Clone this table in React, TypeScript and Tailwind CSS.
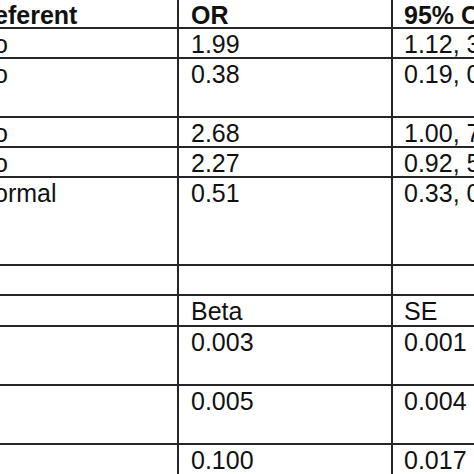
const ROWS: { h: string; cells: [string, string, string]; bold?: boolean }[] = [
  { h: "h-[29px]", cells: ["Referent", "OR", "95% CI"], bold: true },
  { h: "h-[30px]", cells: ["No", "1.99", "1.12, 3.54"] },
  { h: "h-[59px]", cells: ["No", "0.38", "0.19, 0.76"] },
  { h: "h-[30px]", cells: ["No", "2.68", "1.00, 7.18"] },
  { h: "h-[30px]", cells: ["No", "2.27", "0.92, 5.60"] },
  { h: "h-[88px]", cells: ["Normal", "0.51", "0.33, 0.79"] },
  { h: "h-[30px]", cells: ["", "", ""] },
  { h: "h-[31px]", cells: ["", "Beta", "SE"] },
  { h: "h-[59px]", cells: ["", "0.003", "0.001"] },
  { h: "h-[59px]", cells: ["", "0.005", "0.004"] },
  { h: "h-[59px]", cells: ["", "0.100", "0.017"] },
];

export default function App() {
  return (
    <div className="h-[474px] w-[474px] overflow-hidden bg-white font-['Liberation_Sans',Arial,sans-serif] text-[25px] leading-[28px] text-[#111]">
      <div className="-ml-[35px] w-[600px]">
        {ROWS.map((row, i) => (
          <div
            key={i}
            className={`grid grid-cols-[214px_214px_1fr] border-b-2 border-[#262626] ${row.h} ${row.bold ? "font-bold" : ""}`}
          >
            <div className="border-r-2 border-[#262626] pl-[11px] pt-[1px] whitespace-nowrap">
              {row.cells[0]}
            </div>
            <div className="border-r-2 border-[#262626] pl-3 pt-[1px] whitespace-nowrap">
              {row.cells[1]}
            </div>
            <div className="pl-[11px] pt-[1px] whitespace-nowrap">
              {row.cells[2]}
            </div>
          </div>
        ))}
      </div>
    </div>
  );
}
